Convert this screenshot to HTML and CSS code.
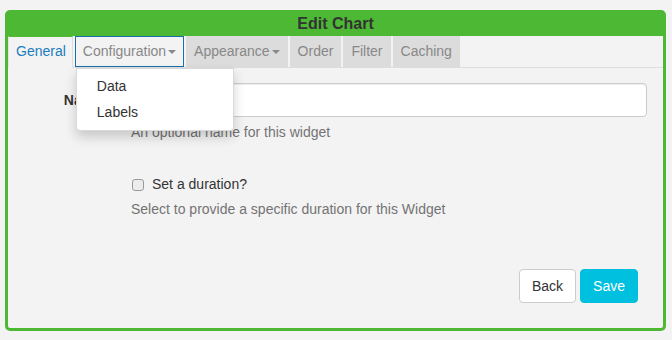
FILE: index.html
```html
<!DOCTYPE HTML>
<html>
<head>
    <title>Edit Chart</title>
    <link rel="stylesheet" href="styles.css">
</head>
<body>
    <div class="modal">
        <div class="modal-head">Edit Chart</div>
        <ul class="tabs">
            <li class="tab active">General</li>
            <li class="tab open">Configuration<span class="caret"></span>
                <ul class="menu">
                    <li>Data</li>
                    <li>Labels</li>
                </ul>
            </li>
            <li class="tab">Appearance<span class="caret"></span></li>
            <li class="tab">Order</li>
            <li class="tab">Filter</li>
            <li class="tab">Caching</li>
        </ul>
        <div class="modal-body">
            <div class="form-row">
                <label class="label-col">Name</label>
                <div class="field-col">
                    <input class="text-input" type="text">
                    <div class="help">An optional name for this widget</div>
                </div>
            </div>
            <div class="form-row duration">
                <div class="label-col"></div>
                <div class="field-col">
                    <label class="check"><span class="box"></span>Set a duration?</label>
                    <div class="help">Select to provide a specific duration for this Widget</div>
                </div>
            </div>
            <div class="buttons">
                <button class="btn">Back</button>
                <button class="btn save">Save</button>
            </div>
        </div>
    </div>
</body>
</html>
```

FILE: styles.css
```css
body{
    background-color: #f3f3f3;
    margin: 0;
    padding: 10px 6px 0 5px;
    font-family: "Liberation Sans", Arial, sans-serif;
    font-size: 14px;
    color: #333;
}
.modal{
    height: 321px;
    box-sizing: border-box;
    border: 3px solid #4cb833;
    border-radius: 5px;
    background-color: #f3f3f3;
}
.modal-head{
    background-color: #4cb833;
    height: 23px;
    line-height: 22px;
    text-align: center;
    font-size: 16px;
    font-weight: bold;
    color: #333;
}
.tabs{
    display: flex;
    list-style: none;
    margin: 0;
    padding: 0;
    border-bottom: 1px solid #ddd;
}
.tab{
    position: relative;
    height: 31px;
    box-sizing: border-box;
    line-height: 29px;
    padding: 0 7px;
    margin-right: 2px;
    border: 1px solid #dcdcdc;
    background-color: #dcdcdc;
    color: #888;
}
.tab.active{
    background-color: #f3f3f3;
    border-color: #4cb833 #ddd #f3f3f3 #e4e4e4;
    padding-right: 6px;
    height: 32px;
    margin-bottom: -1px;
    color: #1b7dbf;
}
.tab.open{
    background-color: #f3f3f3;
    border-color: #1a6fa8;
}
.caret{
    display: inline-block;
    width: 0;
    height: 0;
    margin-left: 2px;
    vertical-align: middle;
    border-top: 4px solid #888;
    border-left: 4px solid transparent;
    border-right: 4px solid transparent;
}
.menu{
    position: absolute;
    top: 31px;
    left: 0;
    width: 158px;
    box-sizing: border-box;
    list-style: none;
    margin: 0;
    padding: 4px 0 5px;
    background-color: #fff;
    border: 1px solid rgba(0,0,0,.15);
    border-radius: 0 0 4px 4px;
    box-shadow: 0 6px 12px rgba(0,0,0,.175);
    z-index: 2;
}
.menu li{
    line-height: 26px;
    padding: 0 20px;
    color: #333;
}
.modal-body{
    padding: 0 16px 0 0;
}
.form-row{
    display: flex;
    margin-top: 15px;
}
.label-col{
    width: 109px;
    flex-shrink: 0;
    box-sizing: border-box;
    padding-right: 15px;
    text-align: right;
    font-weight: bold;
    line-height: 34px;
}
.field-col{
    flex: 1;
    margin-left: 14px;
}
.text-input{
    display: block;
    width: 100%;
    height: 34px;
    box-sizing: border-box;
    border: 1px solid #ccc;
    border-radius: 4px;
    background-color: #fff;
    box-shadow: inset 0 1px 1px rgba(0,0,0,.075);
    margin: 0;
}
.help{
    margin-top: 5px;
    line-height: 20px;
    color: #737373;
}
.duration{
    margin-top: 32px;
}
.check{
    display: flex;
    align-items: center;
    line-height: 20px;
}
.box{
    width: 10px;
    height: 10px;
    margin: 1px 8px 0 1px;
    border: 1px solid #9a9a9a;
    border-radius: 3px;
    background-color: #ececec;
}
.buttons{
    display: flex;
    justify-content: flex-end;
    gap: 4px;
    margin-top: 50px;
    padding-right: 9px;
}
.btn{
    font-family: "Liberation Sans", Arial, sans-serif;
    font-size: 14px;
    height: 34px;
    padding: 0 12px;
    border: 1px solid #ccc;
    border-radius: 4px;
    background-color: #fff;
    color: #333;
}
.btn.save{
    background-color: #00c0df;
    border-color: #00c0df;
    color: #fff;
}
```
